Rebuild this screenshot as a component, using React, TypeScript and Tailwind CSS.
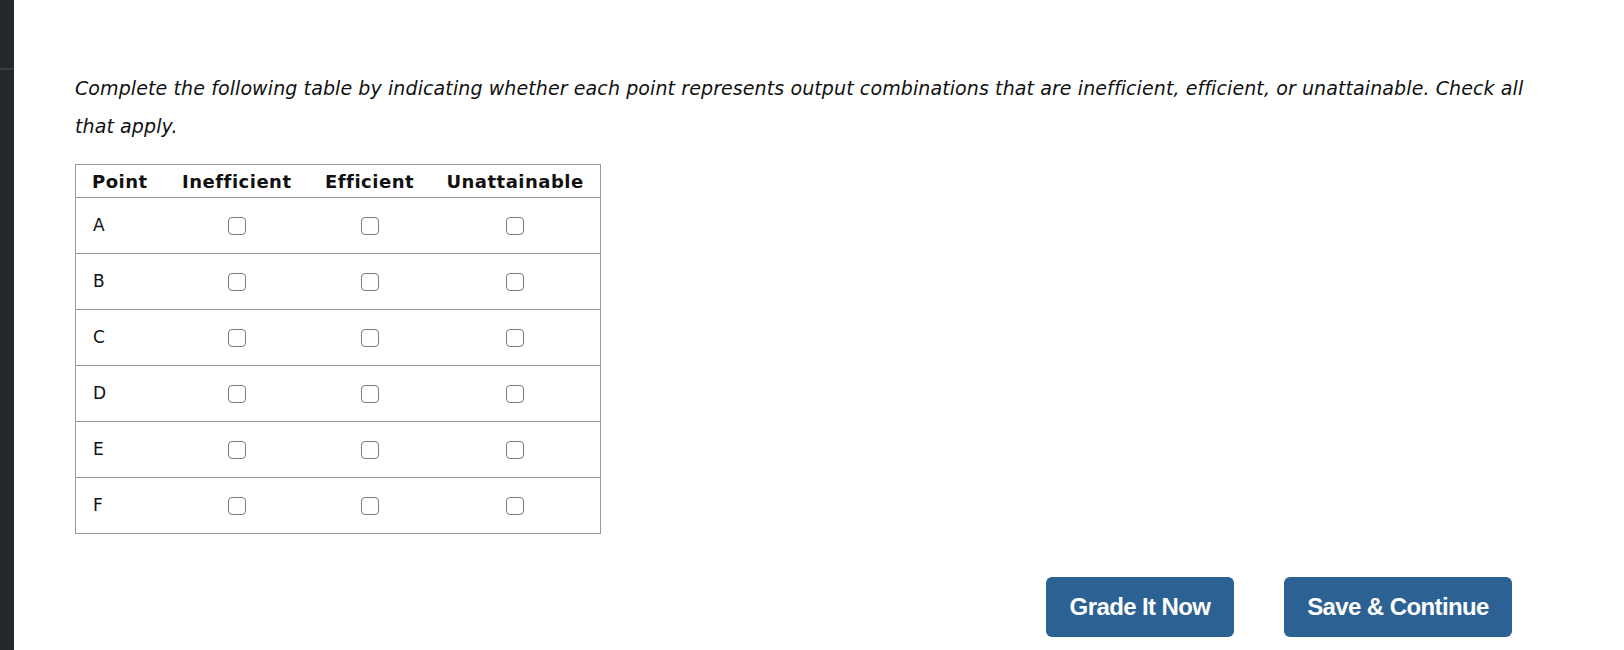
import React from 'react';

const points = ['A', 'B', 'C', 'D', 'E', 'F'];
const columns = ['Inefficient', 'Efficient', 'Unattainable'];

function Box() {
  return (
    <span className="inline-block h-[18px] w-[18px] rounded-[4px] border-[1.5px] border-[#7a7a7a] bg-white align-middle" />
  );
}

export default function App() {
  return (
    <div className="flex min-h-[650px] w-full bg-white">
      {/* dark rail on the left */}
      <div className="flex w-[14px] shrink-0 flex-col bg-[#24282d]">
        <div className="h-[68px]" />
        <div className="h-[2px] bg-[#3a3e44]" />
      </div>

      <div className="flex flex-1 flex-col pl-[61px] pr-[60px] pt-[69px] font-['DejaVu_Sans',Verdana,sans-serif] text-[#111]">
        <p className="max-w-[1470px] text-[19px] italic leading-[38px] tracking-[0.1px]">
          Complete the following table by indicating whether each point represents output combinations that are
          inefficient, efficient, or unattainable. Check all that apply.
        </p>

        <table className="mt-[19px] w-[526px] border-collapse border border-[#9a9a9a]">
          <thead>
            <tr className="h-[33px] border-b border-[#9a9a9a]">
              <th className="w-[89px] pl-[16px] text-left text-[18px] font-bold tracking-[0.5px]">Point</th>
              {columns.map((c, i) => (
                <th
                  key={c}
                  className={
                    i === 0
                      ? 'w-[144px] text-center text-[18px] font-bold tracking-[0.5px]'
                      : i === 1
                        ? 'w-[121px] text-center text-[18px] font-bold tracking-[0.5px]'
                        : 'w-[170px] text-center text-[18px] font-bold tracking-[0.5px]'
                  }
                >
                  {c}
                </th>
              ))}
            </tr>
          </thead>
          <tbody>
            {points.map((p) => (
              <tr key={p} className="h-[56px] border-b border-[#9a9a9a]">
                <td className="pl-[17px] text-left text-[17px]">{p}</td>
                {columns.map((c) => (
                  <td key={c} className="text-center">
                    <Box />
                  </td>
                ))}
              </tr>
            ))}
          </tbody>
        </table>

        <div className="mt-[43px] flex justify-end gap-[50px] pr-[52px] font-['Liberation_Sans',Arial,sans-serif]">
          <button className="h-[60px] w-[188px] rounded-[6px] bg-[#2c6193] text-[24px] font-bold tracking-[-0.6px] text-white">
            Grade It Now
          </button>
          <button className="h-[60px] w-[228px] rounded-[6px] bg-[#2c6193] text-[24px] font-bold tracking-[-0.6px] text-white">
            Save &amp; Continue
          </button>
        </div>
      </div>
    </div>
  );
}
